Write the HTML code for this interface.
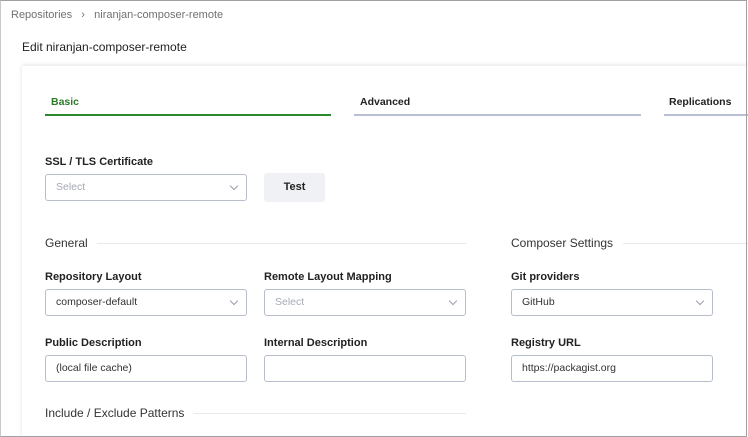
<!DOCTYPE html>
<html><head><meta charset="utf-8"><style>
*{box-sizing:border-box;margin:0;padding:0}
html,body{width:748px;height:437px;overflow:hidden}
body{background:#fff;font-family:"Liberation Sans",sans-serif;position:relative}
.frame{position:absolute;left:0;top:0;width:747px;height:437px;border:1px solid #a0a0a0;border-left:1px solid #c8c8c8}
.a{position:absolute;white-space:nowrap}
.card{position:absolute;left:22px;top:65px;width:726px;height:372px;background:#fff;box-shadow:0 0 4px rgba(0,0,0,.12);border-top:1px solid #f0f0f0}
.lbl{font-size:11px;font-weight:bold;color:#222}
.box{position:absolute;height:27px;border:1px solid #b8bdcc;border-radius:3px;background:#fff;font-size:10.5px;color:#333;padding-left:10px;line-height:25px}
.ph{color:#a5a9b5}
.chev{position:absolute;right:9px;top:8px;width:6px;height:6px;border-right:1px solid #9aa0ac;border-bottom:1px solid #9aa0ac;transform:rotate(45deg)}
.sec{font-size:12px;color:#333}
.line{position:absolute;height:1px;background:#e8e9ec}
</style></head><body>
<div class="a" style="left:11px;top:9px;font-size:11px;color:#707070">Repositories &nbsp;&nbsp;›&nbsp;&nbsp; niranjan-composer-remote</div>
<div class="a" style="left:22px;top:40px;font-size:12px;color:#222">Edit niranjan-composer-remote</div>
<div class="card"></div>
<div class="a" style="left:51px;top:96px;font-size:10.5px;font-weight:bold;color:#2a7a2a">Basic</div>
<div class="a" style="left:45px;top:114px;width:286px;height:2px;background:#2a8a2a"></div>
<div class="a" style="left:360px;top:96px;font-size:10.5px;font-weight:bold;color:#222">Advanced</div>
<div class="a" style="left:354px;top:114px;width:287px;height:2px;background:#b8bfd2"></div>
<div class="a" style="left:669px;top:96px;font-size:10.5px;font-weight:bold;color:#222">Replications</div>
<div class="a" style="left:664px;top:114px;width:84px;height:2px;background:#b8bfd2"></div>

<div class="a lbl" style="left:45px;top:156px">SSL / TLS Certificate</div>
<div class="box" style="left:45px;top:174px;width:202px"><span class="ph">Select</span><i class="chev"></i></div>
<div class="a" style="left:264px;top:173px;width:61px;height:29px;background:#f0f1f4;border-radius:3px;font-size:11px;font-weight:bold;color:#222;text-align:center;line-height:29px">Test</div>

<div class="a sec" style="left:45px;top:236px">General</div>
<div class="line" style="left:97px;top:243px;width:369px"></div>
<div class="a sec" style="left:511px;top:236px">Composer Settings</div>
<div class="line" style="left:623px;top:243px;width:125px"></div>

<div class="a lbl" style="left:45px;top:271px">Repository Layout</div>
<div class="box" style="left:45px;top:289px;width:202px">composer-default<i class="chev"></i></div>
<div class="a lbl" style="left:264px;top:271px">Remote Layout Mapping</div>
<div class="box" style="left:264px;top:289px;width:202px"><span class="ph">Select</span><i class="chev"></i></div>
<div class="a lbl" style="left:511px;top:271px">Git providers</div>
<div class="box" style="left:511px;top:289px;width:202px">GitHub<i class="chev"></i></div>

<div class="a lbl" style="left:45px;top:337px">Public Description</div>
<div class="box" style="left:45px;top:355px;width:202px">(local file cache)</div>
<div class="a lbl" style="left:264px;top:337px">Internal Description</div>
<div class="box" style="left:264px;top:355px;width:202px"></div>
<div class="a lbl" style="left:511px;top:337px">Registry URL</div>
<div class="box" style="left:511px;top:355px;width:202px">https://packagist.org</div>

<div class="a sec" style="left:45px;top:406px">Include / Exclude Patterns</div>
<div class="line" style="left:193px;top:413px;width:273px"></div>
<div class="frame"></div>
</body></html>
